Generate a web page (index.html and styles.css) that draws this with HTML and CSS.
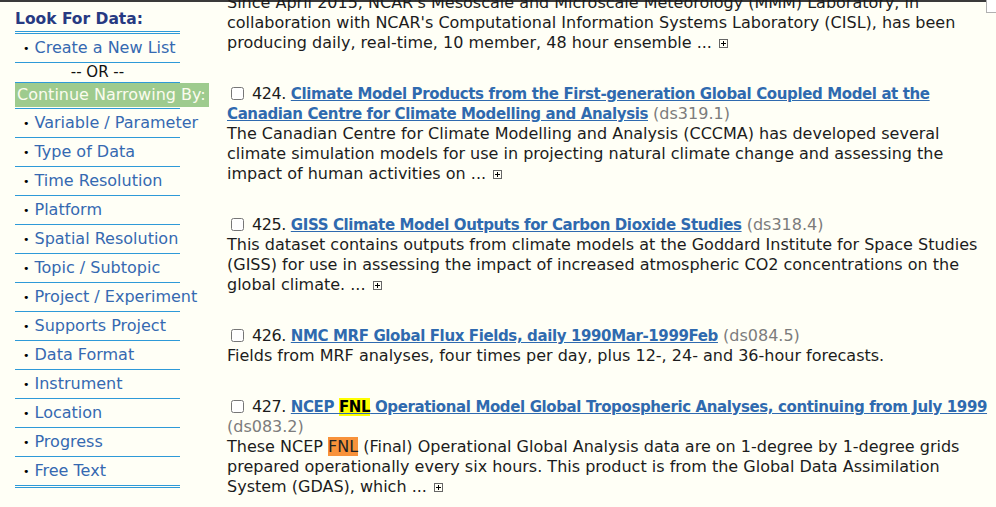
FILE: index.html
```html
<!DOCTYPE html>
<html>
<head>
<meta charset="utf-8">
<link rel="stylesheet" href="styles.css">
</head>
<body>
<div class="topbar"></div>
<div class="corner"></div>
<div class="page">
  <nav class="sidebar">
    <div class="side-head">Look For Data:</div>
    <ul class="side-list">
      <li class="item"><span class="bul">•</span><a>Create a New List</a></li>
      <li class="or">-- OR --</li>
      <li class="narrow"><span class="green">Continue Narrowing By:</span></li>
      <li class="item"><span class="bul">•</span><a>Variable / Parameter</a></li>
      <li class="item"><span class="bul">•</span><a>Type of Data</a></li>
      <li class="item"><span class="bul">•</span><a>Time Resolution</a></li>
      <li class="item"><span class="bul">•</span><a>Platform</a></li>
      <li class="item"><span class="bul">•</span><a>Spatial Resolution</a></li>
      <li class="item"><span class="bul">•</span><a>Topic / Subtopic</a></li>
      <li class="item"><span class="bul">•</span><a>Project / Experiment</a></li>
      <li class="item"><span class="bul">•</span><a>Supports Project</a></li>
      <li class="item"><span class="bul">•</span><a>Data Format</a></li>
      <li class="item"><span class="bul">•</span><a>Instrument</a></li>
      <li class="item"><span class="bul">•</span><a>Location</a></li>
      <li class="item"><span class="bul">•</span><a>Progress</a></li>
      <li class="item last"><span class="bul">•</span><a>Free Text</a></li>
    </ul>
  </nav>
  <main class="results">
    <div class="entry">
      <div class="desc">Since April 2015, NCAR's Mesoscale and Microscale Meteorology (MMM) Laboratory, in<br>collaboration with NCAR's Computational Information Systems Laboratory (CISL), has been<br>producing daily, real-time, 10 member, 48 hour ensemble ... <span class="more"></span></div>
    </div>
    <div class="entry">
      <div class="title"><input type="checkbox"> <span class="num">424.</span> <a>Climate Model Products from the First-generation Global Coupled Model at the<br>Canadian Centre for Climate Modelling and Analysis</a> <span class="ds">(ds319.1)</span></div>
      <div class="desc">The Canadian Centre for Climate Modelling and Analysis (CCCMA) has developed several<br>climate simulation models for use in projecting natural climate change and assessing the<br>impact of human activities on ... <span class="more"></span></div>
    </div>
    <div class="entry">
      <div class="title"><input type="checkbox"> <span class="num">425.</span> <a>GISS Climate Model Outputs for Carbon Dioxide Studies</a> <span class="ds">(ds318.4)</span></div>
      <div class="desc">This dataset contains outputs from climate models at the Goddard Institute for Space Studies<br>(GISS) for use in assessing the impact of increased atmospheric CO2 concentrations on the<br>global climate. ... <span class="more"></span></div>
    </div>
    <div class="entry">
      <div class="title"><input type="checkbox"> <span class="num">426.</span> <a>NMC MRF Global Flux Fields, daily 1990Mar-1999Feb</a> <span class="ds">(ds084.5)</span></div>
      <div class="desc">Fields from MRF analyses, four times per day, plus 12-, 24- and 36-hour forecasts.</div>
    </div>
    <div class="entry">
      <div class="title"><input type="checkbox"> <span class="num">427.</span> <a>NCEP <mark class="hl-y">FNL</mark> Operational Model Global Tropospheric Analyses, continuing from July 1999</a><br><span class="ds">(ds083.2)</span></div>
      <div class="desc">These NCEP <mark class="hl-o">FNL</mark> (Final) Operational Global Analysis data are on 1-degree by 1-degree grids<br>prepared operationally every six hours. This product is from the Global Data Assimilation<br>System (GDAS), which ... <span class="more"></span></div>
    </div>
  </main>
</div>
</body>
</html>
```
FILE: styles.css
```css
html, body {
  margin: 0;
  padding: 0;
  background: #fffff6;
  overflow: hidden;
}
body {
  font-family: "DejaVu Sans", sans-serif;
  color: #1c1c1c;
  position: relative;
  height: 507px;
}
.topbar {
  height: 2px;
  background: #3a3a3a;
  margin-right: 10px;
}
.corner {
  position: absolute;
  top: 0;
  right: 0;
  width: 9px;
  height: 12px;
  background: #ffffff;
  border-left: 1px solid #b0b0b0;
  border-bottom: 1px solid #b0b0b0;
}
.page {
  display: flex;
  align-items: flex-start;
}
.sidebar {
  width: 165px;
  margin-left: 15px;
  margin-top: 6px;
  flex: none;
}
.side-head {
  font-weight: bold;
  font-size: 15.5px;
  color: #273a82;
  line-height: 23px;
  border-bottom: 3px double #2e9ad8;
}
.side-list {
  list-style: none;
  margin: 0;
  padding: 0;
  font-size: 16px;
}
.side-list li {
  border-bottom: 1px solid #2e9ad8;
  white-space: nowrap;
}
.item {
  height: 28px;
  line-height: 28px;
  padding-left: 8px;
}
.item a {
  color: #3569b1;
}
.bul {
  color: #000;
  font-size: 11px;
  margin-right: 5px;
  vertical-align: 1px;
}
.item.last {
  border-bottom: 3px double #2e9ad8 !important;
}
.or {
  height: 19px;
  line-height: 19px;
  text-align: center;
  color: #111;
  font-size: 15px;
}
.narrow {
  height: 25px;
}
.green {
  display: inline-block;
  background: #9ecb8e;
  color: #fbfbee;
  height: 24px;
  line-height: 24px;
  padding: 0 3px 0 2px;
}
.results {
  margin-left: 47px;
  margin-top: -9px;
  font-size: 16px;
  line-height: 20px;
  white-space: nowrap;
}
.entry {
  margin-bottom: 31px;
}
.title {
  line-height: 20px;
}
.title input {
  width: 13px;
  height: 13px;
  margin: 0 3px 0 4px;
  vertical-align: -1px;
}
.num {
  letter-spacing: -0.5px;
}
.title a {
  color: #2f6aaf;
  font-weight: bold;
  font-size: 15px;
  letter-spacing: -0.38px;
  text-decoration: underline;
}
.ds {
  color: #7c7c7c;
}
mark {
  color: #000;
  padding: 0;
}
.hl-y {
  background: #ffff00;
}
.hl-o {
  background: #f8923a;
  color: #222;
}
.more {
  display: inline-block;
  width: 7px;
  height: 7px;
  border: 1px solid #666;
  position: relative;
  vertical-align: 0px;
  margin-left: 2px;
}
.more::before, .more::after {
  content: "";
  position: absolute;
  background: #000;
}
.more::before {
  left: 1px;
  top: 3px;
  width: 5px;
  height: 1px;
}
.more::after {
  left: 3px;
  top: 1px;
  width: 1px;
  height: 5px;
}
```
